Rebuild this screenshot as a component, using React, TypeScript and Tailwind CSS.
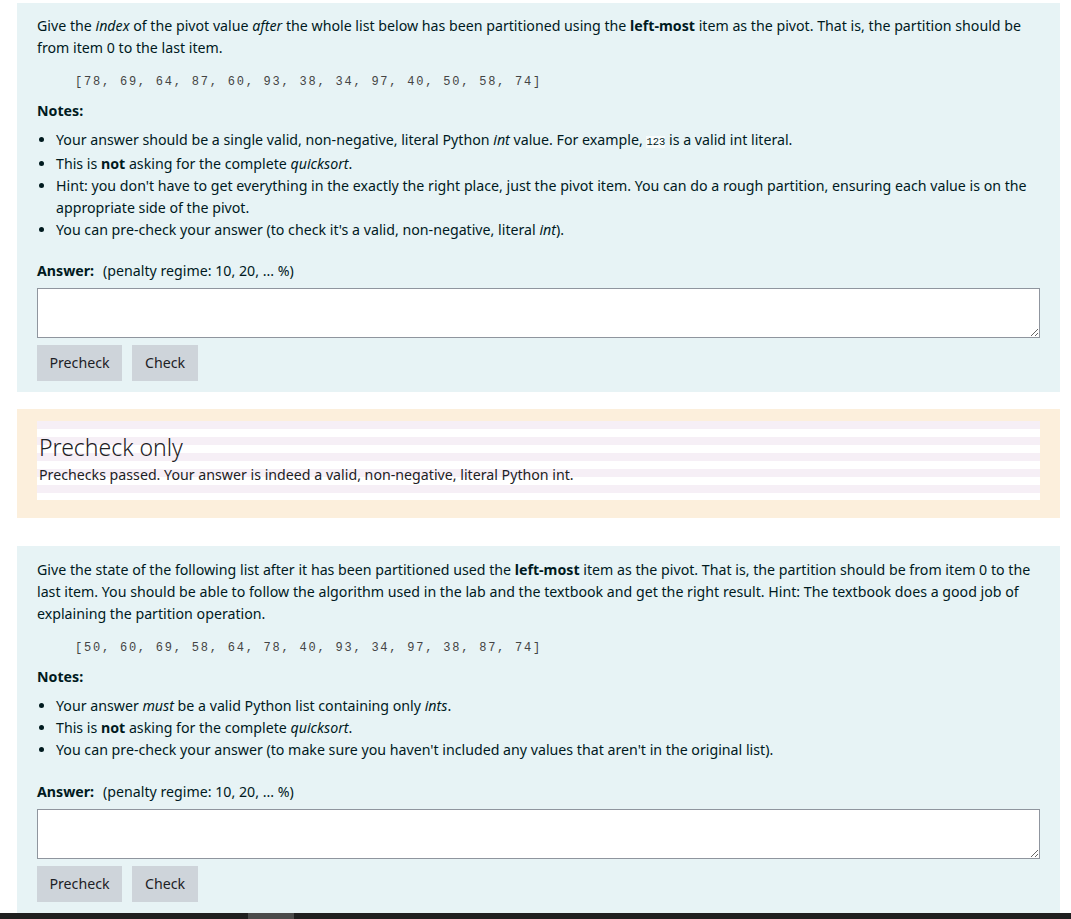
import React from 'react';

const Code = ({ children }: { children: React.ReactNode }) => (
  <pre className="ml-[38px] mt-[13px] mb-[8px] font-['Liberation_Mono',monospace] text-[12px] leading-[20px] tracking-[1.78px] text-[#444]">
    {children}
  </pre>
);

const AnswerBlock = ({ lower = false }: { lower?: boolean }) => (
  <div>
    <p className={lower ? 'mt-[20px]' : 'mt-[19px]'}>
      <b className="font-bold">Answer:</b>
      <span className="ml-[9px]">(penalty regime: 10, 20, ... %)</span>
    </p>
    <textarea
      aria-label="Answer"
      className="mt-[6px] block h-[50px] w-full border border-[#8f959e] bg-white"
    />
    <div className="mt-[7px] flex gap-[10px]">
      <button className="h-[36px] w-[85px] bg-[#ced4da] text-center text-[#1d2125]">Precheck</button>
      <button className="h-[36px] w-[66px] bg-[#ced4da] text-center text-[#1d2125]">Check</button>
    </div>
  </div>
);

export default function App() {
  return (
    <div className="min-h-screen bg-white pt-[3px] font-['Noto_Sans',sans-serif] text-[14.2px] leading-[22px] text-[#001a1e]">
      <div className="ml-[17px] mr-[11px]">
        {/* Question 1 */}
        <div className="bg-[#e7f3f5] px-5 pt-3 pb-[11px]">
          <p>
            Give the <i>index</i> of the pivot value <i>after</i> the whole list below has been partitioned using the{' '}
            <b className="font-bold">left-most</b> item as the pivot. That is, the partition should be
            <br />
            from item 0 to the last item.
          </p>
          <Code>[78, 69, 64, 87, 60, 93, 38, 34, 97, 40, 50, 58, 74]</Code>
          <p className="font-bold">Notes:</p>
          <ul className="mt-[7px] list-disc pl-[19px]">
            <li>
              Your answer should be a single valid, non-negative, literal Python <i>int</i> value. For example,{' '}
              <code className="bg-white/70 font-['Liberation_Mono',monospace] text-[10.5px]">123</code> is a valid int literal.
            </li>
            <li>
              This is <b className="font-bold">not</b> asking for the complete <i>quicksort</i>.
            </li>
            <li>
              Hint: you don't have to get everything in the exactly the right place, just the pivot item. You can do a rough
              partition, ensuring each value is on the
              <br />
              appropriate side of the pivot.
            </li>
            <li>
              You can pre-check your answer (to check it's a valid, non-negative, literal <i>int</i>).
            </li>
          </ul>
          <AnswerBlock />
        </div>

        {/* Precheck feedback */}
        <div className="mt-[17px] bg-[#fcefdc] px-5 pt-3 pb-[18px]">
          <div className="bg-[repeating-linear-gradient(180deg,#f6eff6_0px,#f6eff6_8px,#ffffff_8px,#ffffff_16px)] px-[2px] pt-[11px] pb-[14px] text-[#1d2125]">
            <h3 className="text-[23px] font-light leading-[30px]">Precheck only</h3>
            <p className="mt-[2px]">Prechecks passed. Your answer is indeed a valid, non-negative, literal Python int.</p>
          </div>
        </div>

        {/* Question 2 */}
        <div className="mt-[28px] bg-[#e7f3f5] px-5 pt-[13px] pb-[11px]">
          <p>
            Give the state of the following list after it has been partitioned used the <b className="font-bold">left-most</b>{' '}
            item as the pivot. That is, the partition should be from item 0 to the
            <br />
            last item. You should be able to follow the algorithm used in the lab and the textbook and get the right result. Hint:
            The textbook does a good job of
            <br />
            explaining the partition operation.
          </p>
          <Code>[50, 60, 69, 58, 64, 78, 40, 93, 34, 97, 38, 87, 74]</Code>
          <p className="font-bold">Notes:</p>
          <ul className="mt-[7px] list-disc pl-[19px]">
            <li>
              Your answer <i>must</i> be a valid Python list containing only <i>ints</i>.
            </li>
            <li>
              This is <b className="font-bold">not</b> asking for the complete <i>quicksort</i>.
            </li>
            <li>
              You can pre-check your answer (to make sure you haven't included any values that aren't in the original list).
            </li>
          </ul>
          <AnswerBlock lower />
        </div>
      </div>

      {/* bottom scroll strip */}
      <div className="fixed bottom-0 left-0 right-0 h-[6px] bg-[#1f1f1f]">
        <div className="absolute left-[248px] top-0 h-full w-[46px] bg-[#4a4a4a]" />
      </div>
    </div>
  );
}
